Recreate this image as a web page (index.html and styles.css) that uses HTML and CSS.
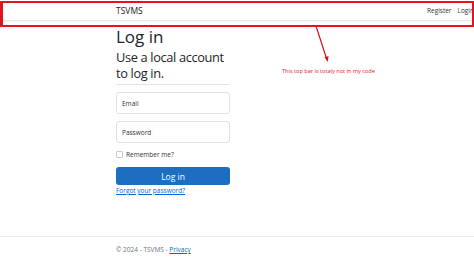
FILE: index.html
```html
<!DOCTYPE html>
<html lang="en">
<head>
  <meta charset="UTF-8" />
  <meta name="viewport" content="width=device-width, initial-scale=1.0" />
  <title>Log in - TSVMS</title>
  <link rel="stylesheet" href="styles.css">
</head>
<body>
  <header class="navbar">
    <div class="container nav-inner">
      <a class="brand" href="#">TSVMS</a>
      <div class="nav-links">
        <a href="#">Register</a>
        <a href="#">Login</a>
      </div>
    </div>
  </header>

  <main class="container">
    <div class="login-col">
      <h1>Log in</h1>
      <h2>Use a local account to log in.</h2>
      <hr />
      <div class="field"><span>Email</span></div>
      <div class="field"><span>Password</span></div>
      <label class="remember"><span class="check"></span>Remember me?</label>
      <button>Log in</button>
      <a class="forgot" href="#">Forgot your password?</a>
    </div>
  </main>

  <footer class="footer">
    <div class="container">&copy; 2024 - TSVMS - <a href="#">Privacy</a></div>
  </footer>

  <!-- annotation drawn over the screenshot -->
  <div class="mark-box"></div>
  <svg class="mark-arrow" width="40" height="50" viewBox="0 0 40 50">
    <line x1="2" y1="1" x2="13" y2="35" stroke="#d9121b" stroke-width="1.2" />
    <path d="M10.5 32 L13.6 37 L14.6 31.3 Z" fill="#d9121b" />
  </svg>
  <div class="mark-note">This top bar is totaly not in my code</div>
</body>
</html>
```

FILE: styles.css
```css
body {
  margin: 0;
  font-family: "Segoe UI", "Open Sans", "Noto Sans", sans-serif;
  color: #212529;
  background: #fff;
  height: 260px;
  position: relative;
  overflow: hidden;
}
a {
  color: #0366d6;
}
.container {
  padding-left: 116px;
}
.navbar {
  height: 20px;
  border-bottom: 1px solid #e8e8e8;
  box-shadow: 0 1px 2px rgba(0, 0, 0, 0.04);
  background: #fff;
}
.nav-inner {
  display: flex;
  align-items: center;
  height: 100%;
}
.brand {
  font-size: 8.5px;
  color: #222;
  text-decoration: none;
}
.nav-links {
  margin-left: auto;
  display: flex;
  gap: 6px;
  margin-right: 0;
}
.nav-links a {
  font-size: 6.5px;
  color: #333;
  text-decoration: none;
}
.login-col {
  width: 114px;
}
h1 {
  font-size: 17px;
  font-weight: 400;
  margin: 6px 0 0;
  line-height: 20px;
}
h2 {
  font-size: 12.8px;
  font-weight: 400;
  letter-spacing: -0.35px;
  margin: 2px 0 0;
  line-height: 16px;
}
hr {
  border: 0;
  border-top: 1px solid #e4e4e4;
  margin: 3px 0 7px;
}
.field {
  height: 20px;
  border: 1px solid #dee2e6;
  border-radius: 3px;
  margin-bottom: 7px;
  display: flex;
  align-items: center;
  padding-left: 5px;
  font-size: 6.5px;
  color: #333;
}
.remember {
  display: flex;
  align-items: center;
  gap: 3px;
  font-size: 6.5px;
  color: #333;
  margin-top: 7px;
}
.check {
  width: 5px;
  height: 5px;
  border: 1px solid #ccc;
  border-radius: 1px;
}
button {
  display: block;
  width: 114px;
  height: 18px;
  margin-top: 8px;
  background: #1b6ec2;
  color: #fff;
  border: none;
  border-radius: 3px;
  font-family: inherit;
  font-size: 8.5px;
  padding: 0;
}
.forgot {
  display: block;
  font-size: 6.5px;
  margin-top: 1px;
}
.footer {
  position: absolute;
  left: 0;
  right: 0;
  top: 236px;
  border-top: 1px solid #eee;
  padding-top: 8px;
  font-size: 6.5px;
  color: #6c757d;
}
.mark-box {
  position: absolute;
  left: 0;
  top: 1px;
  width: 469px;
  height: 22px;
  border: 2px solid #e3141c;
  border-left-width: 3px;
}
.mark-arrow {
  position: absolute;
  left: 314px;
  top: 25px;
}
.mark-note {
  position: absolute;
  left: 282px;
  top: 67px;
  font-size: 5.6px;
  color: #e3141c;
}
```
